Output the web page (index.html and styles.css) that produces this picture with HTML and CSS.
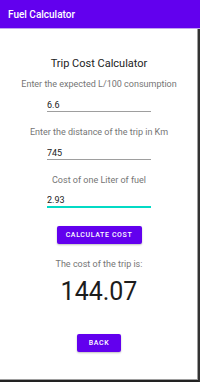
FILE: index.html
```html
<!DOCTYPE html>
<html lang="en">
<head>
    <meta charset="UTF-8">
    <meta name="viewport" content="width=device-width, initial-scale=1.0">
    <title>Fuel Calculator</title>
    <link rel="stylesheet" href="styles.css">
</head>
<body>

    <div class="screen">
        <!-- App bar -->
        <div class="app-bar">
            <span class="app-title">Fuel Calculator</span>
        </div>

        <!-- Calculator -->
        <div class="content">
            <h2 class="title">Trip Cost Calculator</h2>

            <label class="field-label" for="consumption">Enter the expected L/100 consumption</label>
            <input class="field" type="text" id="consumption" value="6.6">

            <label class="field-label" for="distance">Enter the distance of the trip in Km</label>
            <input class="field" type="text" id="distance" value="745">

            <label class="field-label" for="price">Cost of one Liter of fuel</label>
            <input class="field active" type="text" id="price" value="2.93">

            <button class="btn calc-btn">Calculate Cost</button>

            <p class="result-label">The cost of the trip is:</p>
            <p class="result">144.07</p>

            <button class="btn back-btn">Back</button>
        </div>
    </div>

</body>
</html>
```

FILE: styles.css
```css
/* Reset */
* {
    margin: 0;
    padding: 0;
    box-sizing: border-box;
    font-family: Roboto, "Noto Sans", sans-serif;
}

body {
    background-color: #fff;
    width: 200px;
    height: 382px;
    overflow: hidden;
}

.screen {
    width: 200px;
    height: 382px;
    border-right: 2px solid #333;
    border-bottom: 2px solid #222;
    box-shadow: inset -1px -1px 0 #9e9e9e;
    display: flex;
    flex-direction: column;
}

/* App bar */
.app-bar {
    height: 28px;
    background-color: #6200ee;
    padding: 0 8px;
    display: flex;
    align-items: center;
    box-shadow: 0 1px 0 #c1a3ef;
    margin-right: -2px;
}

.app-title {
    color: #fff;
    font-size: 10px;
    font-weight: 500;
}

/* Content */
.content {
    display: flex;
    flex-direction: column;
    align-items: center;
    padding-top: 29px;
}

.title {
    font-size: 11px;
    line-height: 13px;
    font-weight: 400;
    color: #222;
}

.field-label {
    font-size: 9px;
    line-height: 11px;
    color: #757575;
    margin-top: 9px;
}

.field + .field-label {
    margin-top: 15px;
}

.field {
    width: 104px;
    height: 13px;
    margin-top: 9px;
    border: none;
    border-bottom: 1px solid #9e9e9e;
    outline: none;
    font-size: 9px;
    line-height: 11px;
    color: #212121;
    background: transparent;
    padding: 0 0 1px 0;
}

.field.active {
    border-bottom: 2px solid #03dac5;
}

/* Buttons */
.btn {
    background-color: #6200ee;
    color: #fff;
    border: none;
    border-radius: 2px;
    height: 18px;
    font-size: 7px;
    font-weight: 500;
    letter-spacing: 0.09em;
    text-transform: uppercase;
    box-shadow: 0 1px 2px rgba(0, 0, 0, 0.25);
    cursor: pointer;
}

.calc-btn {
    width: 85px;
    margin-top: 18px;
}

.back-btn {
    width: 44px;
    margin-top: 28px;
}

/* Result */
.result-label {
    font-size: 9px;
    line-height: 11px;
    color: #757575;
    margin-top: 15px;
}

.result {
    font-size: 25px;
    line-height: 29px;
    color: #1c1c1c;
    margin-top: 7px;
}
```
